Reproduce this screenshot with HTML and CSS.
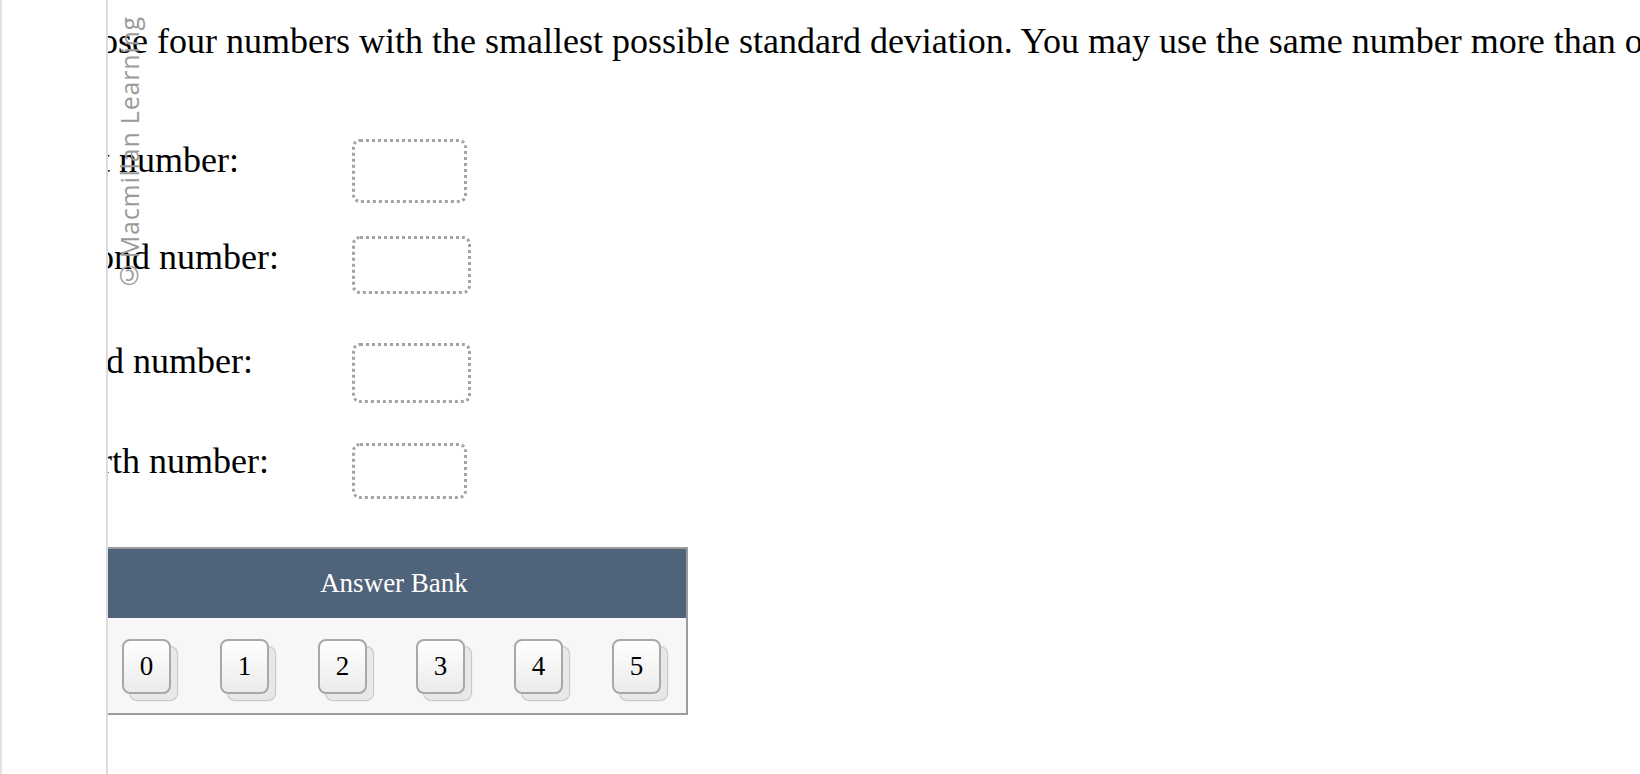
FILE: index.html
```html
<!DOCTYPE html>
<html lang="en">
<head>
    <meta charset="UTF-8">
    <title>Standard Deviation Question</title>
    <link rel="stylesheet" href="styles.css">
</head>
<body>
    <div class="frame">
        <div class="viewport">
            <div class="question">
                <p class="prompt">Choose four numbers with the smallest possible standard deviation. You may use the same number more than once.</p>

                <div class="fields">
                    <div class="field">
                        <span class="field-label">First number:</span>
                        <span class="drop"></span>
                    </div>
                    <div class="field">
                        <span class="field-label">Second number:</span>
                        <span class="drop"></span>
                    </div>
                    <div class="field">
                        <span class="field-label">Third number:</span>
                        <span class="drop"></span>
                    </div>
                    <div class="field">
                        <span class="field-label">Fourth number:</span>
                        <span class="drop"></span>
                    </div>
                </div>

                <div class="bank">
                    <div class="bank-title">Answer Bank</div>
                    <div class="bank-items">
                        <div class="tile">0</div>
                        <div class="tile">1</div>
                        <div class="tile">2</div>
                        <div class="tile">3</div>
                        <div class="tile">4</div>
                        <div class="tile">5</div>
                    </div>
                </div>
            </div>
        </div>
        <div class="watermark">©Macmillan Learning</div>
    </div>
</body>
</html>
```

FILE: styles.css
```css
body {
    margin: 0;
    font-family: "Liberation Serif", "Times New Roman", serif;
    color: #000;
    background: #fff;
}
.frame {
    position: relative;
    display: flex;
    height: 100vh;
    box-sizing: border-box;
    border-left: 2px solid #e2e2e2;
    padding-left: 104px;
}
.viewport {
    flex: 1;
    border-left: 2px solid #dcdcdc;
    overflow: hidden;
}
.question {
    margin-left: -68px;
}
.prompt {
    margin: 20px 0 0;
    font-size: 36px;
    white-space: nowrap;
}
.fields {
    margin-top: 77px;
}
.field {
    display: flex;
    align-items: flex-start;
}
.field-label {
    width: 312px;
    box-sizing: border-box;
    padding-left: 4px;
    font-size: 36px;
}
.drop {
    box-sizing: border-box;
    width: 115px;
    height: 64px;
    border: 3px dotted #a3a3a3;
    border-radius: 8px;
}
.field:nth-child(2) { margin-top: 33px; }
.field:nth-child(2) .drop { width: 119px; height: 58px; }
.field:nth-child(3) { margin-top: 49px; }
.field:nth-child(3) .drop { width: 119px; height: 60px; }
.field:nth-child(3) .field-label { margin-top: -3px; }
.field:nth-child(4) { margin-top: 40px; }
.field:nth-child(4) .drop { width: 115px; height: 56px; }
.field:nth-child(4) .field-label { margin-top: -3px; }

.bank {
    width: 588px;
    box-sizing: border-box;
    margin-top: 48px;
    margin-left: 60px;
    border: 2px solid #9b9b9b;
}
.bank-title {
    height: 69px;
    display: flex;
    justify-content: center;
    align-items: center;
    background-color: #4f637a;
    color: #fff;
    font-size: 27px;
}
.bank-items {
    display: flex;
    gap: 49px;
    padding: 21px 0 19px 20px;
    background-color: #f7f7f7;
}
.tile {
    box-sizing: border-box;
    width: 49px;
    height: 55px;
    display: flex;
    justify-content: center;
    align-items: center;
    border: 2px solid #a8a8a8;
    border-radius: 8px;
    background: linear-gradient(#fff, #ebebeb);
    box-shadow: 7px 7px 0 -1px #e8e8e8, 7px 7px 1px 0 #c2c2c2;
    font-size: 27px;
}
.watermark {
    position: absolute;
    left: 115px;
    top: 16px;
    writing-mode: vertical-rl;
    transform: rotate(180deg);
    font-family: "Open Sans", "DejaVu Sans", sans-serif;
    font-size: 25px;
    letter-spacing: 0.8px;
    line-height: 1;
    color: #9a9a9a;
    pointer-events: none;
}
```
